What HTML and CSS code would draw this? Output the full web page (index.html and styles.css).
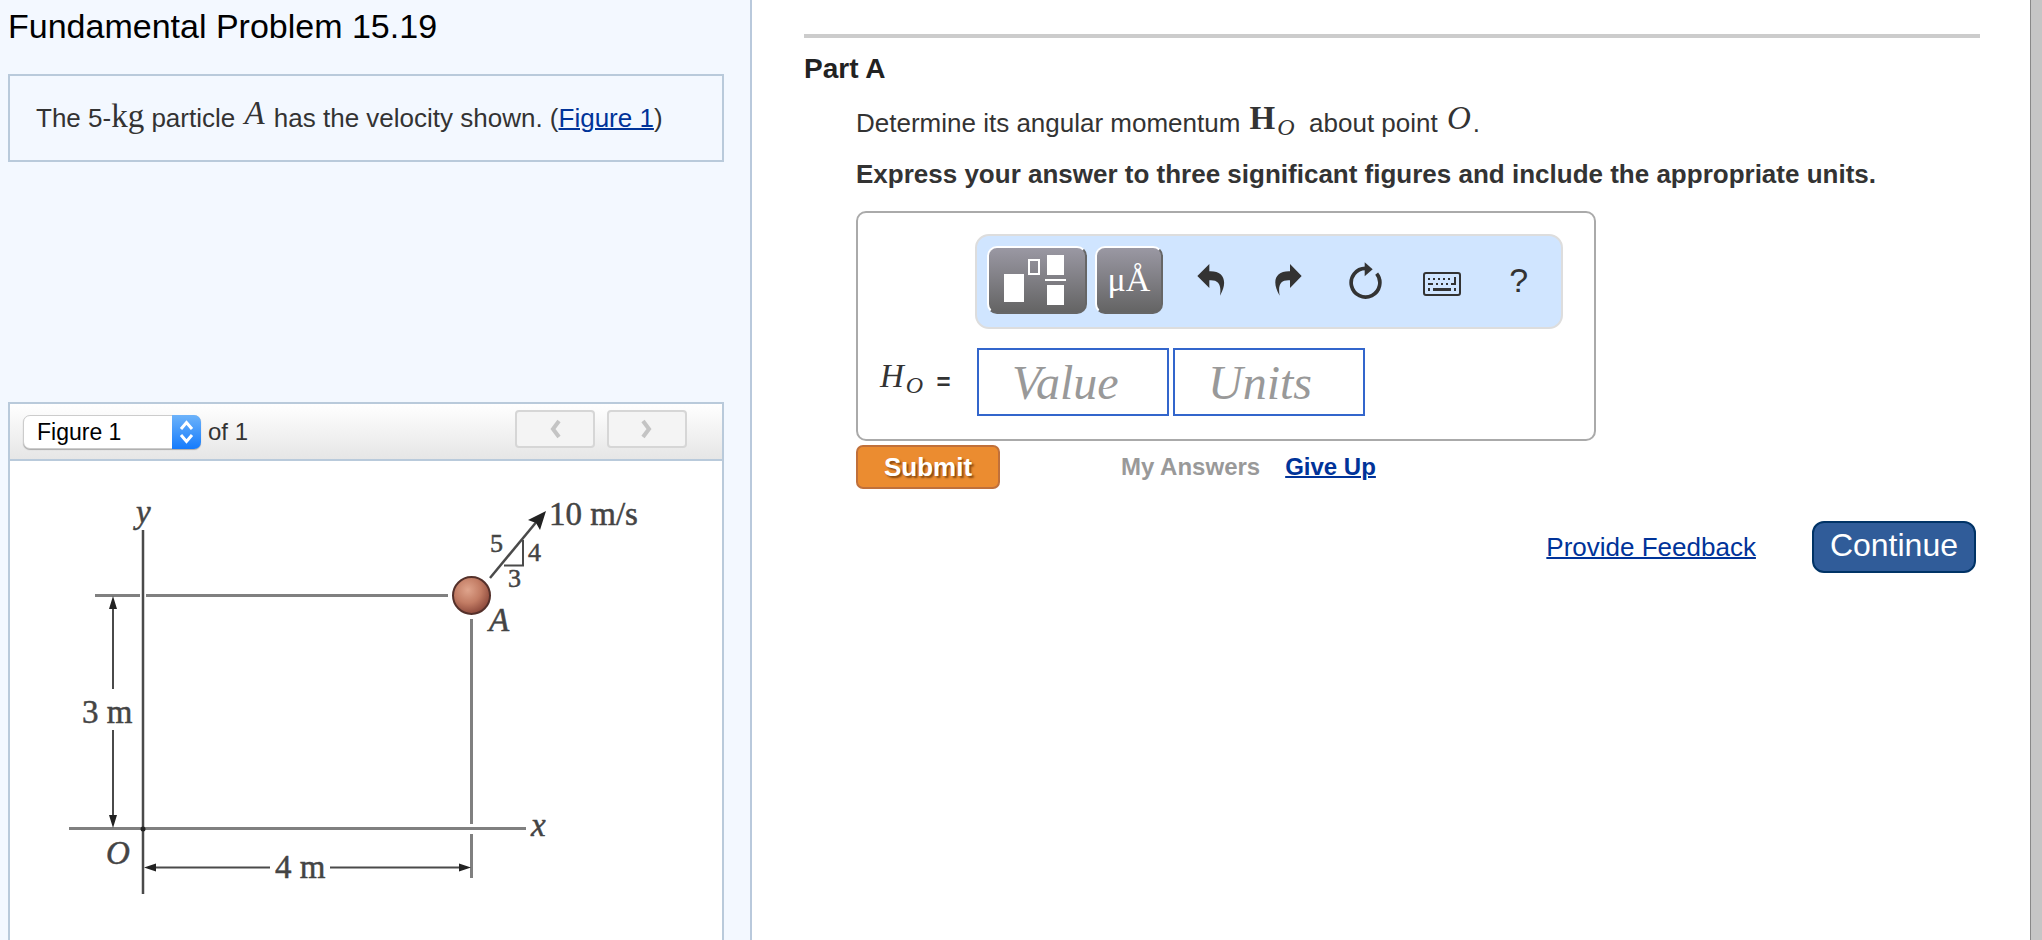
FILE: index.html
```html
<!DOCTYPE html>
<html lang="en">
<head>
<meta charset="utf-8">
<title>Fundamental Problem 15.19</title>
<link rel="stylesheet" href="styles.css">
</head>
<body>
<div class="page">
  <aside class="problem">
    <h1 class="problem-title">Fundamental Problem 15.19</h1>
    <p class="statement">The 5-<span class="math">kg</span> particle <i class="math math-raised">A</i> has the velocity shown. (<a class="link" href="#figure">Figure 1</a>)</p>

    <section class="figure" id="figure">
      <div class="figure-bar">
        <div class="figure-pick">
          <select class="figure-select" id="figure-select" aria-label="Figure"><option>Figure 1</option></select>
          <svg class="figure-stepper" viewBox="0 0 29 34" aria-hidden="true"><path d="M9 14l5.500-6.500 5.500 6.500M9 20l5.500 6.500 5.500-6.500"/></svg>
        </div>
        <label class="figure-count" for="figure-select">of 1</label>
        <div class="figure-nav">
          <button class="nav-button" type="button" aria-label="Previous figure"><svg viewBox="0 0 14 20"><path d="M11 2L5 10l6 8"/></svg></button>
          <button class="nav-button" type="button" aria-label="Next figure"><svg viewBox="0 0 14 20"><path d="M3 2l6 8-6 8"/></svg></button>
        </div>
      </div>
      <svg class="diagram" viewBox="10 461 712 479" role="img" aria-label="Particle A at 4 m, 3 m from O, moving at 10 m/s">
        <defs>
          <radialGradient id="ball" cx="0.4" cy="0.35" r="0.65">
            <stop offset="0" stop-color="#dfa48c"/>
            <stop offset="0.55" stop-color="#c27c64"/>
            <stop offset="1" stop-color="#8e4a3c"/>
          </radialGradient>
        </defs>
        <g class="axis">
          <path d="M143 530V894"/>
          <path class="axis-soft" d="M69 828.500H526M95 595.500H140M146 595.500H448M471.500 619V824M471.500 834V878"/>
          <path class="axis-thin" d="M113 600V689M113 730V824M149 867.500H270M330 867.500H467"/>
          <path d="M490 578L538 520"/>
          <path class="axis-thin" d="M504 565.500H523V540"/>
        </g>
        <g class="heads">
          <path d="M113 596l4 13h-8zM113 828l4-13h-8zM144 867.500l12-4v8zM471 867.500l-12-4v8zM546 511l-6 19-4-7-8-3z"/>
          <circle cx="143" cy="829" r="2.500"/>
        </g>
        <circle class="ball" cx="471.500" cy="595.500" r="18.500"/>
        <g class="diagram-text">
          <text class="var" x="136" y="523">y</text>
          <text class="var" x="531" y="836">x</text>
          <text class="var" x="106" y="864">O</text>
          <text class="var" x="489" y="631">A</text>
          <text x="82" y="723">3 m</text>
          <text x="275" y="878">4 m</text>
          <text x="549" y="525">10 m/s</text>
          <text class="small" x="490" y="552">5</text>
          <text class="small" x="528" y="561">4</text>
          <text class="small" x="508" y="587">3</text>
        </g>
      </svg>
    </section>
  </aside>

  <main class="work">
    <hr class="rule">
    <h2 class="part-title">Part A</h2>
    <div class="part">
      <p class="prompt">Determine its angular momentum <b class="math math-raised">H</b><i class="math math-sub">O</i>&nbsp; about point <i class="math math-raised">O</i>.</p>
      <p class="instructions">Express your answer to three significant figures and include the appropriate units.</p>

      <form class="answer">
        <div class="toolbar">
          <button class="palette palette-wide" type="button" aria-label="Templates">
            <svg viewBox="0 0 64 52"><path fill="#fff" d="M1 20h20v28H1zM44 1h17v20H44zM44 31h17v20H44zM42 25h21v2H42z"/><path fill="none" stroke="#fff" stroke-width="2" d="M26 6h10v14H26z"/></svg>
          </button>
          <button class="palette palette-units" type="button" aria-label="Symbols">μÅ</button>
          <div class="tools">
            <button class="tool" type="button" aria-label="Undo"><svg viewBox="46 96 99 108"><path d="M53 138L89 102V124C132 122 146 154 121 197C126 163 116 149 89 151V174Z"/></svg></button>
            <button class="tool" type="button" aria-label="Redo"><svg viewBox="277 96 99 108"><path d="M366 138L331 102V124C288 122 274 154 300 197C294 163 304 149 331 151V174Z"/></svg></button>
            <button class="tool" type="button" aria-label="Reset"><svg class="reset" viewBox="500 92 108 117"><path fill="none" stroke="#333" stroke-width="11" d="M589 130A43 43 0 1 1 555 114"/><path d="M553 96L577 117L553 138Z"/></svg></button>
            <button class="tool" type="button" aria-label="Keyboard shortcuts"><svg class="keyboard" viewBox="0 0 40 26"><rect x="2" y="2" width="36" height="22" rx="2" fill="none" stroke="#333" stroke-width="2"/><path d="M6 7h2v2H6zM11 7h2v2h-2zM16 7h2v2h-2zM21 7h2v2h-2zM26 7h2v2h-2zM32 6h2v8h-5v-2h3zM6 12h5v2H6zM14 12h2v2h-2zM19 12h2v2h-2zM24 12h2v2h-2zM6 17h2v3H6zM11 17h18v3H11zM32 17h2v3h-2z"/></svg></button>
            <button class="tool tool-help" type="button" aria-label="Help">?</button>
          </div>
        </div>
        <label class="answer-label" for="value"><i class="math math-raised">H</i><i class="math math-sub">O</i>&nbsp; <b>=</b></label>
        <div class="fields">
          <input class="field" id="value" type="text" placeholder="Value">
          <input class="field" type="text" placeholder="Units" aria-label="Units">
        </div>
      </form>

      <div class="actions">
        <button class="submit" type="submit">Submit</button>
        <span class="my-answers">My Answers</span>
        <a class="link give-up" href="#">Give Up</a>
      </div>
    </div>
    <footer class="next">
      <a class="link" href="#">Provide Feedback</a>
      <button class="continue" type="button">Continue</button>
    </footer>
  </main>
  <div class="edge"></div>
</div>
</body>
</html>
```
FILE: styles.css
```css
* { box-sizing: border-box; }

body {
  margin: 0;
  background: #fff;
  color: #333;
  font: 26px/32px "Liberation Sans", Arial, sans-serif;
}

h1, h2, p { margin: 0; }
button, select, input { font: inherit; }
button { cursor: pointer; }

.page {
  display: grid;
  grid-template-columns: 752fr 1278fr 12px;
  min-height: 100vh;
}

.link { color: #039; text-decoration: underline; text-decoration-thickness: 2px; }

.math {
  font-family: "Liberation Serif", "Times New Roman", serif;
  font-size: 33px;
  line-height: 24px;
}
.math-raised { margin: 0 2px; vertical-align: 3px; }
.math-sub { font-size: 24px; vertical-align: -3px; }

/* Problem column */
.problem {
  display: flex;
  flex-direction: column;
  padding: 6px 26px 0 8px;
  border-right: 2px solid #b9c9dc;
  background: #f3f8ff;
}
.problem-title {
  color: #000;
  font-size: 34px;
  font-weight: 400;
  line-height: 40px;
}
.statement {
  margin: 28px 0 240px;
  padding: 24px 26px;
  border: 2px solid #b9cadb;
  line-height: 36px;
}

.figure {
  display: flex;
  flex: 1;
  flex-direction: column;
  border: 2px solid #b9cadb;
  border-bottom: 0;
  background: #fff;
}
.figure-bar {
  display: flex;
  align-items: center;
  height: 57px;
  padding: 0 35px 0 13px;
  border-bottom: 2px solid #b9cadb;
  background: linear-gradient(#fff, #e6e6e6);
}
.figure-pick { position: relative; width: 178px; height: 34px; }
.figure-select {
  width: 100%;
  height: 100%;
  padding: 0 40px 0 13px;
  border: 1px solid #ccc;
  border-radius: 7px;
  background: #fff;
  box-shadow: 0 1px 1px #aaa;
  color: #000;
  font-size: 23px;
  appearance: none;
}
.figure-stepper {
  position: absolute;
  top: 0;
  right: 0;
  width: 29px;
  height: 34px;
  border-radius: 0 7px 7px 0;
  background: linear-gradient(#6db3fa, #157bfc);
  fill: none;
  stroke: #fff;
  stroke-width: 3;
  pointer-events: none;
}
.figure-count { margin-left: 7px; font-size: 24px; }
.figure-nav { display: flex; gap: 12px; margin-left: auto; padding-bottom: 6px; }
.nav-button {
  display: flex;
  align-items: center;
  justify-content: center;
  width: 80px;
  height: 38px;
  padding: 0;
  border: 2px solid #d6d6d6;
  border-radius: 4px;
  background: #f4f4f4;
}
.nav-button svg { width: 14px; height: 20px; fill: none; stroke: #c4c4c4; stroke-width: 4; }

.diagram { display: block; width: 100%; height: auto; }
.axis { fill: none; stroke: #4a4a4a; stroke-width: 2.500; }
.axis-soft { stroke: #808080; stroke-width: 3; }
.axis-thin { stroke-width: 2; }
.heads { fill: #222; }
.ball { fill: url(#ball); stroke: #54302a; stroke-width: 2; }
.diagram-text {
  fill: #444;
  stroke: #444;
  stroke-width: 0.500;
  font: 33px "Liberation Serif", "Times New Roman", serif;
}
.diagram-text .var { font-style: italic; }
.diagram-text .small { font-size: 26px; }

/* Work column */
.work { padding: 34px 50px 0 52px; }
.rule { height: 4px; margin: 0; border: 0; background: #ccc; }
.part-title { margin-top: 15px; color: #222; font-size: 28px; }
.part { padding-left: 52px; }
.prompt { margin-top: 21px; }
.instructions { margin-top: 19px; font-weight: 700; }

.answer {
  display: grid;
  grid-template-columns: 117px 1fr;
  row-gap: 19px;
  max-width: 740px;
  margin-top: 21px;
  padding: 21px 31px 23px 0;
  border: 2px solid #aaa;
  border-radius: 10px;
}
.toolbar {
  display: flex;
  grid-column: 2;
  gap: 8px;
  height: 95px;
  padding: 10px 4px 13px 10px;
  border: 2px solid #ddd;
  border-radius: 14px;
  background: #d0e5ff;
}
.palette {
  display: flex;
  align-items: center;
  justify-content: center;
  padding: 0;
  border: 2px solid;
  border-color: #fff #666 #666 #fff;
  border-radius: 10px;
  background: linear-gradient(#9a98a3, #646464);
  color: #fff;
}
.palette-wide { width: 100px; padding-right: 5px; }
.palette-wide svg { width: 64px; height: 52px; }
.palette-units { width: 68px; font: 34px "Liberation Serif", "Times New Roman", serif; }
.tools { display: grid; flex: 1; grid-template-columns: repeat(5, 1fr); padding-left: 2px; }
.tool {
  display: flex;
  align-items: center;
  justify-content: center;
  padding: 0;
  border: 0;
  background: none;
  color: #333;
}
.tool svg { height: 36px; fill: #333; }
.tool .reset { height: 39px; }
.tool .keyboard { height: 26px; margin-top: 8px; }
.tool-help { font-size: 34px; }

.answer-label { padding: 16px 0 0 20px; font-size: 24px; white-space: nowrap; }
.fields { display: flex; gap: 4px; padding-left: 2px; }
.field {
  width: 192px;
  height: 68px;
  padding: 0 0 0 33px;
  border: 2px solid #36c;
  background: #fff;
  font: italic 48px "Liberation Serif", "Times New Roman", serif;
}
.field::placeholder { color: #999; opacity: 1; }

.actions {
  display: flex;
  align-items: center;
  margin-top: 4px;
  font-size: 24px;
  font-weight: 700;
}
.submit {
  width: 144px;
  height: 44px;
  padding: 0;
  border: 2px solid #c0703a;
  border-radius: 7px;
  background: #eb8c30;
  color: #fff;
  font-size: 26px;
  text-shadow: 2px 2px 2px #8a4a10;
}
.my-answers { margin-left: 121px; color: #999; }
.give-up { margin-left: 25px; }

.next {
  display: flex;
  align-items: center;
  justify-content: flex-end;
  gap: 56px;
  margin-top: 32px;
  padding-right: 4px;
}
.continue {
  height: 52px;
  padding: 0 16px 4px;
  border: 2px solid #036;
  border-radius: 12px;
  background: #305c99;
  color: #fff;
  font-size: 32px;
}

.edge { border-left: 1px solid #888; background: #c6c6c6; }
```
